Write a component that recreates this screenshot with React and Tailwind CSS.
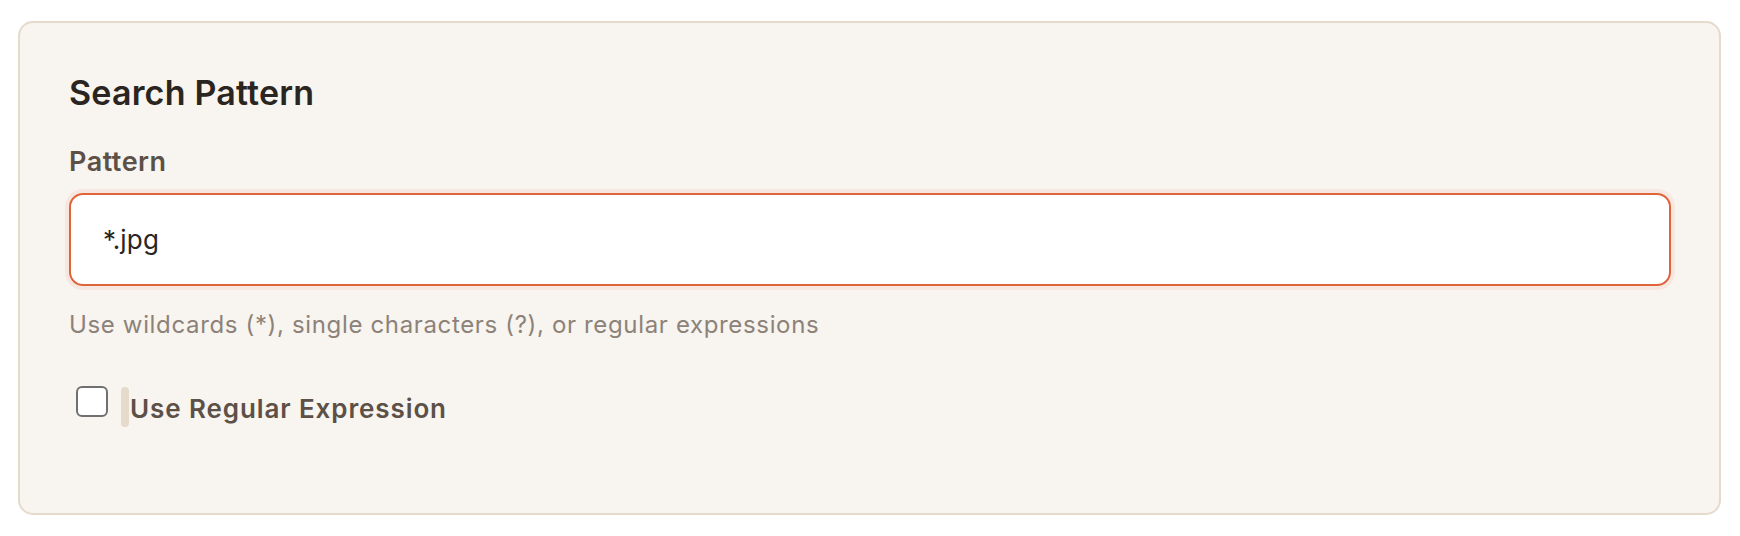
export default function App() {
    return (
        <div
            className="w-[1740px] h-[536px] bg-white pl-[18px] pr-[19px] pt-[21px]"
            style={{ fontFamily: "Inter, 'Noto Sans', sans-serif" }}
        >
            {/* Card */}
            <div className="rounded-[15px] border-2 border-[#e6dacb] bg-[#f8f4ef] pl-[49px] pr-[48px] pt-[50px] pb-[84px]">
                <h2 className="text-[34px] leading-[40px] font-semibold text-[#2a2521] tracking-[0.2px]">
                    Search Pattern
                </h2>

                <label className="block mt-[33px] text-[27px] leading-[32px] font-semibold text-[#5c5047] tracking-[0.5px]">
                    Pattern
                </label>

                <div className="mt-[15px] h-[93px] rounded-[14px] border-2 border-[#e0643a] bg-white px-[32px] flex items-center shadow-[0_0_0_4px_rgba(224,100,58,0.08)]">
                    <span className="text-[26px] leading-[32px] text-[#2a2521] tracking-[0.2px]">*.jpg</span>
                </div>

                <p className="mt-[24px] text-[24px] leading-[30px] text-[#8c8279] tracking-[0.65px]">
                    Use wildcards (*), single characters (?), or regular expressions
                </p>

                {/* Checkbox row */}
                <div className="mt-[46px] flex items-start">
                    <div className="ml-[7px] w-[32px] h-[31px] rounded-[6px] border-2 border-[#707070] bg-white" />
                    <span className="ml-[13px] mt-[1px] w-[8px] h-[40px] rounded-full bg-[#e6dacb]" />
                    <span className="mt-[3px] ml-[1px] text-[26px] leading-[40px] font-semibold text-[#5c5047] tracking-[0.9px]">
                        Use Regular Expression
                    </span>
                </div>
            </div>
        </div>
    );
}
